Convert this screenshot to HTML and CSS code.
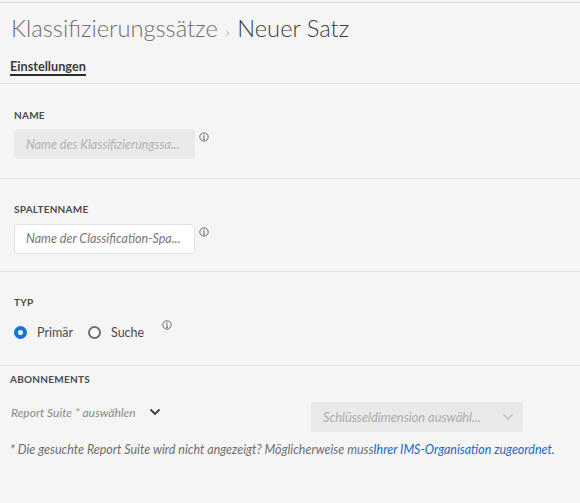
FILE: index.html
```html
<!DOCTYPE html>
<html lang="de">

<head>
  <meta charset="UTF-8" />
  <title>Neuer Satz</title>
  <link rel="stylesheet" href="styles.css">
</head>

<body>
  <div class="page">
    <div class="header">
      <h1 class="title"><span class="crumb">Klassifizierungssätze</span><span class="sep">›</span>Neuer Satz</h1>
      <div class="tabs"><a class="tab" href="#">Einstellungen</a></div>
    </div>

    <div class="section name-section">
      <div class="label">NAME</div>
      <div class="field">
        <div class="input disabled">Name des Klassifizierungssa...</div>
        <svg class="info" viewBox="0 0 10 10"><circle cx="5" cy="5" r="4.2" /><path d="M5 4.4v3M4.2 7.4h1.6M4.3 4.4h.7" /><circle class="dot" cx="5" cy="2.9" r=".6" /></svg>
      </div>
    </div>

    <div class="section column-section">
      <div class="label">SPALTENNAME</div>
      <div class="field">
        <div class="input">Name der Classification-Spa...</div>
        <svg class="info" viewBox="0 0 10 10"><circle cx="5" cy="5" r="4.2" /><path d="M5 4.4v3M4.2 7.4h1.6M4.3 4.4h.7" /><circle class="dot" cx="5" cy="2.9" r=".6" /></svg>
      </div>
    </div>

    <div class="section type-section">
      <div class="label">TYP</div>
      <div class="radios">
        <span class="radio checked"></span><span class="radio-text">Primär</span>
        <span class="radio"></span><span class="radio-text">Suche</span>
        <svg class="info" viewBox="0 0 10 10"><circle cx="5" cy="5" r="4.2" /><path d="M5 4.4v3M4.2 7.4h1.6M4.3 4.4h.7" /><circle class="dot" cx="5" cy="2.9" r=".6" /></svg>
      </div>
    </div>

    <div class="subs">
      <div class="label">ABONNEMENTS</div>
      <div class="subs-row">
        <div class="suite">
          <span>Report Suite * auswählen</span>
          <svg class="chevron" viewBox="0 0 12 8"><path d="M1.5 1.5 6 6l4.5-4.5" /></svg>
        </div>
        <div class="select">
          <span>Schlüsseldimension auswähl...</span>
          <svg class="chevron light" viewBox="0 0 12 8"><path d="M1.5 1.5 6 6l4.5-4.5" /></svg>
        </div>
      </div>
      <p class="note">* Die gesuchte Report Suite wird nicht angezeigt? Möglicherweise muss<a href="#">Ihrer IMS-Organisation zugeordnet</a><span class="dot-blue">.</span></p>
    </div>
  </div>
</body>

</html>
```

FILE: styles.css
```css
* {
  padding: 0;
  margin: 0;
  box-sizing: border-box;
}

html,
body {
  height: 100%;
}

body {
  background: #f5f5f5;
  font-family: Lato, "Open Sans", "Liberation Sans", sans-serif;
  color: #4b4b4b;
  overflow: hidden;
}

.page {
  padding-top: 2px;
}

.header {
  border-top: 1px solid #d6d6d6;
  border-bottom: 1px solid #e1e1e1;
  height: 82px;
  padding: 9px 10px 0;
}

.title {
  padding-left: 1px;
  font-size: 23.7px;
  font-weight: 300;
  line-height: 32px;
  color: #3c3c3c;
}

.crumb {
  color: #6e6e6e;
}

.sep {
  font-size: 13px;
  margin: 0 8px;
  color: #8a8a8a;
}

.tabs {
  margin-top: 7px;
}

.tab {
  display: inline-block;
  font-size: 12.7px;
  font-weight: 700;
  line-height: 16px;
  color: #3c3c3c;
  text-decoration: none;
  border-bottom: 2px solid #2c2c2c;
}

.section {
  border-bottom: 1px solid #e1e1e1;
  padding: 23px 14px 0;
}

.name-section {
  height: 95px;
  padding-top: 24px;
}

.column-section {
  height: 93px;
}

.type-section {
  height: 94px;
}

.label {
  font-size: 10px;
  font-weight: 700;
  line-height: 14px;
  letter-spacing: .25px;
  color: #4b4b4b;
}

.field {
  display: flex;
  align-items: flex-start;
  margin-top: 8px;
}

.name-section .field {
  margin-top: 7px;
}

.input {
  width: 181px;
  height: 30px;
  padding: 0 11px;
  font-size: 12.5px;
  font-style: italic;
  line-height: 28px;
  color: #767676;
  background: #fff;
  border: 1px solid #e3e3e3;
  border-radius: 4px;
  white-space: nowrap;
  overflow: hidden;
}

.input.disabled {
  line-height: 29px;
  color: #b3b3b3;
  background: #e9e9e9;
  border-color: #e9e9e9;
}

.info {
  width: 10px;
  height: 10px;
  margin: 0 0 0 4px;
  fill: none;
  stroke: #4b4b4b;
  stroke-width: .8;
}

.field .info {
  margin-top: 3px;
}

.info .dot {
  fill: #4b4b4b;
  stroke: none;
}

.radios {
  display: flex;
  align-items: center;
  margin-top: 15px;
  height: 16px;
  font-size: 12.5px;
  color: #4b4b4b;
}

.radio {
  width: 13px;
  height: 13px;
  border: 2px solid #6e6e6e;
  border-radius: 50%;
  background: #fff;
  flex: none;
}

.radio.checked {
  border: 4px solid #1473e6;
}

.radio-text {
  margin-left: 10px;
  margin-right: 15px;
}

.radios .info {
  margin: -14px 0 0 3px;
}

.subs {
  padding: 6px 10px 0;
}

.subs-row {
  display: flex;
  align-items: flex-start;
  margin-top: 16px;
}

.suite {
  display: flex;
  align-items: center;
  width: 301px;
  height: 20px;
  padding-left: 1px;
  font-size: 12px;
  font-style: italic;
  color: #8a8a8a;
}

.chevron {
  width: 12px;
  height: 8px;
  margin-left: 13px;
  fill: none;
  stroke: #3c3c3c;
  stroke-width: 1.8;
}

.chevron.light {
  stroke: #bdbdbd;
  stroke-width: 1.3;
  margin-left: 21px;
}

.select {
  display: flex;
  align-items: center;
  width: 212px;
  height: 30px;
  padding-left: 12px;
  font-size: 12.8px;
  font-style: italic;
  color: #adadad;
  background: #e9e9e9;
  border-radius: 2px;
  white-space: nowrap;
}

.note {
  margin-top: 10px;
  font-size: 12.45px;
  font-style: italic;
  line-height: 16px;
  color: #6e6e6e;
  white-space: nowrap;
}

.note a,
.dot-blue {
  color: #1c68c9;
  text-decoration: none;
}
```
